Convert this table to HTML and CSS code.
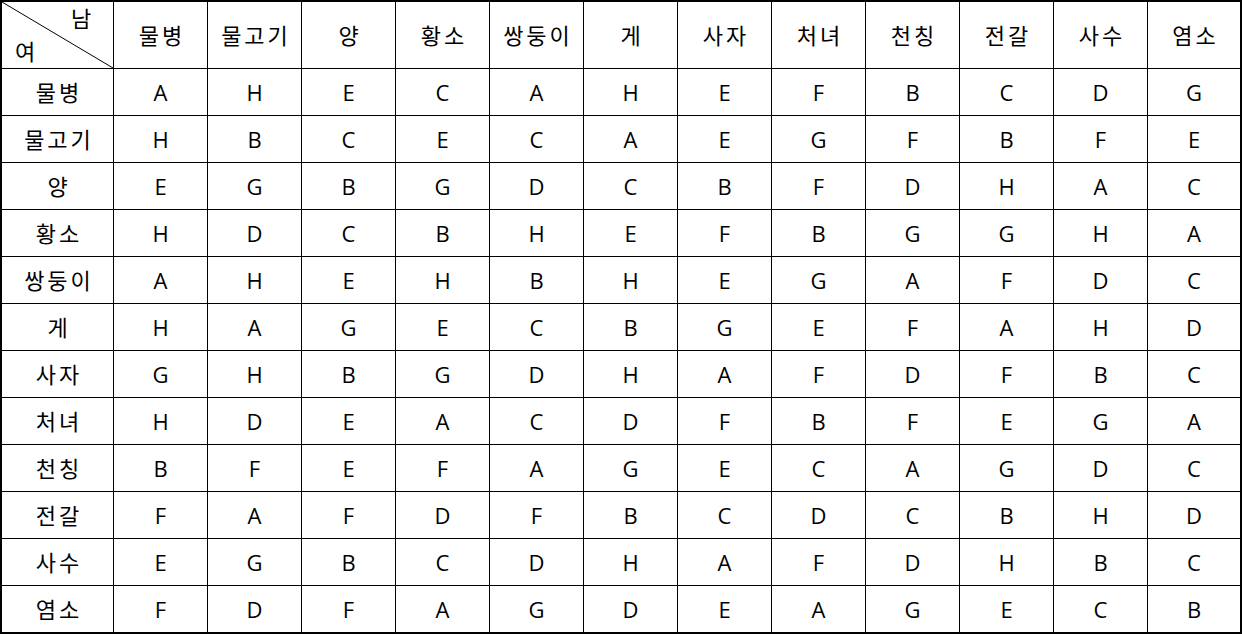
FILE: index.html
```html
<!DOCTYPE html>
<html lang="ko">
<head>
<meta charset="utf-8">
<title>궁합표</title>
<link rel="stylesheet" href="styles.css">
</head>
<body>
<div class="grid">
  <div class="cell corner">
    <svg class="diag" viewBox="0 0 111 66" preserveAspectRatio="none"><line x1="0" y1="0" x2="111" y2="66" stroke="#000" stroke-width="1"/></svg>
    <span class="male">남</span>
    <span class="female">여</span>
  </div>
  <div class="cell">물병</div><div class="cell">물고기</div><div class="cell">양</div><div class="cell">황소</div><div class="cell">쌍둥이</div><div class="cell">게</div><div class="cell">사자</div><div class="cell">처녀</div><div class="cell">천칭</div><div class="cell">전갈</div><div class="cell">사수</div><div class="cell">염소</div>

  <div class="cell">물병</div><div class="cell">A</div><div class="cell">H</div><div class="cell">E</div><div class="cell">C</div><div class="cell">A</div><div class="cell">H</div><div class="cell">E</div><div class="cell">F</div><div class="cell">B</div><div class="cell">C</div><div class="cell">D</div><div class="cell">G</div>
  <div class="cell">물고기</div><div class="cell">H</div><div class="cell">B</div><div class="cell">C</div><div class="cell">E</div><div class="cell">C</div><div class="cell">A</div><div class="cell">E</div><div class="cell">G</div><div class="cell">F</div><div class="cell">B</div><div class="cell">F</div><div class="cell">E</div>
  <div class="cell">양</div><div class="cell">E</div><div class="cell">G</div><div class="cell">B</div><div class="cell">G</div><div class="cell">D</div><div class="cell">C</div><div class="cell">B</div><div class="cell">F</div><div class="cell">D</div><div class="cell">H</div><div class="cell">A</div><div class="cell">C</div>
  <div class="cell">황소</div><div class="cell">H</div><div class="cell">D</div><div class="cell">C</div><div class="cell">B</div><div class="cell">H</div><div class="cell">E</div><div class="cell">F</div><div class="cell">B</div><div class="cell">G</div><div class="cell">G</div><div class="cell">H</div><div class="cell">A</div>
  <div class="cell">쌍둥이</div><div class="cell">A</div><div class="cell">H</div><div class="cell">E</div><div class="cell">H</div><div class="cell">B</div><div class="cell">H</div><div class="cell">E</div><div class="cell">G</div><div class="cell">A</div><div class="cell">F</div><div class="cell">D</div><div class="cell">C</div>
  <div class="cell">게</div><div class="cell">H</div><div class="cell">A</div><div class="cell">G</div><div class="cell">E</div><div class="cell">C</div><div class="cell">B</div><div class="cell">G</div><div class="cell">E</div><div class="cell">F</div><div class="cell">A</div><div class="cell">H</div><div class="cell">D</div>
  <div class="cell">사자</div><div class="cell">G</div><div class="cell">H</div><div class="cell">B</div><div class="cell">G</div><div class="cell">D</div><div class="cell">H</div><div class="cell">A</div><div class="cell">F</div><div class="cell">D</div><div class="cell">F</div><div class="cell">B</div><div class="cell">C</div>
  <div class="cell">처녀</div><div class="cell">H</div><div class="cell">D</div><div class="cell">E</div><div class="cell">A</div><div class="cell">C</div><div class="cell">D</div><div class="cell">F</div><div class="cell">B</div><div class="cell">F</div><div class="cell">E</div><div class="cell">G</div><div class="cell">A</div>
  <div class="cell">천칭</div><div class="cell">B</div><div class="cell">F</div><div class="cell">E</div><div class="cell">F</div><div class="cell">A</div><div class="cell">G</div><div class="cell">E</div><div class="cell">C</div><div class="cell">A</div><div class="cell">G</div><div class="cell">D</div><div class="cell">C</div>
  <div class="cell">전갈</div><div class="cell">F</div><div class="cell">A</div><div class="cell">F</div><div class="cell">D</div><div class="cell">F</div><div class="cell">B</div><div class="cell">C</div><div class="cell">D</div><div class="cell">C</div><div class="cell">B</div><div class="cell">H</div><div class="cell">D</div>
  <div class="cell">사수</div><div class="cell">E</div><div class="cell">G</div><div class="cell">B</div><div class="cell">C</div><div class="cell">D</div><div class="cell">H</div><div class="cell">A</div><div class="cell">F</div><div class="cell">D</div><div class="cell">H</div><div class="cell">B</div><div class="cell">C</div>
  <div class="cell">염소</div><div class="cell">F</div><div class="cell">D</div><div class="cell">F</div><div class="cell">A</div><div class="cell">G</div><div class="cell">D</div><div class="cell">E</div><div class="cell">A</div><div class="cell">G</div><div class="cell">E</div><div class="cell">C</div><div class="cell">B</div>
</div>
</body>
</html>
```
FILE: styles.css
```css
html, body {
  margin: 0;
  padding: 0;
  background: #fff;
}
body {
  font-family: "Open Sans", "Noto Sans CJK KR", "Noto Sans", sans-serif;
  font-size: 22px;
  color: #000;
}
.grid {
  display: grid;
  grid-template-columns: 111px repeat(11, 93px) 92px;
  grid-template-rows: 66px repeat(12, 46px);
  gap: 1px;
  background: #000;
  border: 2px solid #000;
  width: max-content;
}
.cell {
  background: #fff;
  display: flex;
  align-items: center;
  justify-content: center;
  line-height: 1;
  letter-spacing: 3px;
  padding-left: 3px;
}
.corner {
  position: relative;
  display: block;
  padding-left: 0;
}
.diag {
  position: absolute;
  left: 0;
  top: 0;
  width: 100%;
  height: 100%;
}
.male {
  position: absolute;
  left: 69px;
  top: 5px;
}
.female {
  position: absolute;
  left: 13px;
  top: 38px;
}
```
